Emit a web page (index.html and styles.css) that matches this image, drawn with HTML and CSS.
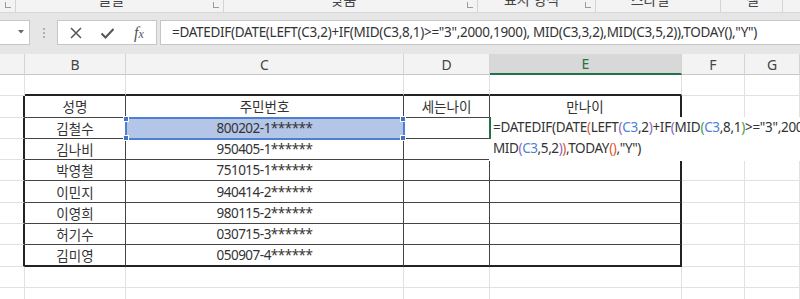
FILE: index.html
```html
<!DOCTYPE html>
<html lang="ko">
<head>
    <meta charset="UTF-8">
    <title>Excel - 만나이</title>
    <link rel="stylesheet" href="styles.css">
</head>
<body>
    <div class="ribbon">
        <div class="group g0"><span class="launch"></span></div>
        <div class="group g1"><span class="label">글꼴</span><span class="launch"></span></div>
        <div class="group g2"><span class="label">맞춤</span><span class="launch"></span></div>
        <div class="group g3"><span class="label">표시 형식</span><span class="launch"></span></div>
        <div class="group g4"><span class="label">스타일</span></div>
        <div class="group g5"><span class="label">셀</span></div>
        <div class="group g6"></div>
    </div>

    <div class="fbar">
        <div class="namebox">
            <svg width="6" height="4" viewBox="0 0 6 4"><path d="M0 0h6L3 3.5z" fill="#666"/></svg>
        </div>
        <div class="grip"><i></i><i></i><i></i></div>
        <div class="btns">
            <svg class="ico" width="14" height="14" viewBox="0 0 14 14"><path d="M2 2l10 10M12 2L2 12" stroke="#555" stroke-width="1.5" fill="none"/></svg>
            <svg class="ico" width="15" height="14" viewBox="0 0 15 14"><path d="M1.5 7.5l4 4L13.5 3" stroke="#555" stroke-width="2" fill="none"/></svg>
            <span class="fx">f<small>x</small></span>
        </div>
        <div class="formula">=DATEDIF(DATE(LEFT(C3,2)+IF(MID(C3,8,1)&gt;="3",2000,1900), MID(C3,3,2),MID(C3,5,2)),TODAY(),"Y")</div>
    </div>

    <div class="sheet">
        <!-- column headers -->
        <div class="c ch"></div>
        <div class="c ch">B</div>
        <div class="c ch">C</div>
        <div class="c ch">D</div>
        <div class="c ch act">E</div>
        <div class="c ch">F</div>
        <div class="c ch">G</div>

        <!-- row 1 -->
        <div class="c"></div>
        <div class="c ttop"></div>
        <div class="c ttop"></div>
        <div class="c ttop"></div>
        <div class="c ttop"></div>
        <div class="c"></div>
        <div class="c"></div>

        <!-- row 2 : header -->
        <div class="c tleft"></div>
        <div class="c tb">성명</div>
        <div class="c tb">주민번호</div>
        <div class="c tb">세는나이</div>
        <div class="c tb tright">만나이</div>
        <div class="c"></div>
        <div class="c"></div>

        <!-- row 3 -->
        <div class="c tleft"></div>
        <div class="c tb">김철수</div>
        <div class="c tb num sel">800202-1******
            <span class="h tl"></span><span class="h bl"></span><span class="h tr"></span><span class="h br"></span>
        </div>
        <div class="c tb"></div>
        <div class="c tb tright edit-cell">
            <div class="edit">
                <div class="l1">=DATEDIF(DATE<b class="o">(</b>LEFT<b class="p">(</b><b class="r">C3</b>,2<b class="p">)</b>+IF<b class="p">(</b>MID<b class="g">(</b><b class="r">C3</b>,8,1<b class="g">)</b>&gt;="3",2000,1900<b class="p">)</b>, MID<b class="p">(</b><b class="r">C3</b>,3,2<b class="p">)</b>,</div>
                <div>MID<b class="p">(</b><b class="r">C3</b>,5,2<b class="p">)</b><b class="o">)</b>,TODAY<b class="o">()</b>,"Y")</div>
            </div>
        </div>
        <div class="c"></div>
        <div class="c"></div>

        <!-- row 4 -->
        <div class="c tleft"></div>
        <div class="c tb">김나비</div>
        <div class="c tb num">950405-1******</div>
        <div class="c tb"></div>
        <div class="c tb tright"></div>
        <div class="c"></div>
        <div class="c"></div>

        <!-- row 5 -->
        <div class="c tleft"></div>
        <div class="c tb">박영철</div>
        <div class="c tb num">751015-1******</div>
        <div class="c tb"></div>
        <div class="c tb tright"></div>
        <div class="c"></div>
        <div class="c"></div>

        <!-- row 6 -->
        <div class="c tleft"></div>
        <div class="c tb">이민지</div>
        <div class="c tb num">940414-2******</div>
        <div class="c tb"></div>
        <div class="c tb tright"></div>
        <div class="c"></div>
        <div class="c"></div>

        <!-- row 7 -->
        <div class="c tleft"></div>
        <div class="c tb">이영희</div>
        <div class="c tb num">980115-2******</div>
        <div class="c tb"></div>
        <div class="c tb tright"></div>
        <div class="c"></div>
        <div class="c"></div>

        <!-- row 8 -->
        <div class="c tleft"></div>
        <div class="c tb">허기수</div>
        <div class="c tb num">030715-3******</div>
        <div class="c tb"></div>
        <div class="c tb tright"></div>
        <div class="c"></div>
        <div class="c"></div>

        <!-- row 9 -->
        <div class="c tleft"></div>
        <div class="c tb tbot">김미영</div>
        <div class="c tb num tbot">050907-4******</div>
        <div class="c tb tbot"></div>
        <div class="c tb tright tbot"></div>
        <div class="c"></div>
        <div class="c"></div>

        <!-- row 10 -->
        <div class="c"></div>
        <div class="c"></div>
        <div class="c"></div>
        <div class="c"></div>
        <div class="c"></div>
        <div class="c"></div>
        <div class="c"></div>

        <!-- row 11 -->
        <div class="c"></div>
        <div class="c"></div>
        <div class="c"></div>
        <div class="c"></div>
        <div class="c"></div>
        <div class="c"></div>
        <div class="c"></div>
    </div>
</body>
</html>
```

FILE: styles.css
```css
*{
    margin: 0;
    padding: 0;
    box-sizing: border-box;
}
body{
    width: 800px;
    height: 299px;
    overflow: hidden;
    background: #e6e6e6;
    font-family: "Noto Sans", "Noto Sans CJK KR", sans-serif;
    color: #333;
}

/* ribbon bottom strip */
.ribbon{
    height: 13px;
    display: flex;
    background: #f3f3f3;
    border-bottom: 1px solid #d6d6d6;
    overflow: hidden;
}
.group{
    position: relative;
    display: flex;
    justify-content: center;
    border-right: 1px solid #d4d4d4;
    height: 12px;
}
.g0{ width: 16px; }
.g1{ width: 208px; }
.g2{ width: 254px; }
.g3{ width: 118px; }
.g4{ width: 125px; }
.g5{ width: 62px; }
.g6{ flex: 1; border-right: none; }
.label{
    font-size: 14px;
    line-height: 20px;
    margin-top: -10px;
    color: #444;
    white-space: nowrap;
}
.launch{
    position: absolute;
    right: 4px;
    top: 2px;
    width: 6px;
    height: 6px;
    border-left: 1px solid #9a9a9a;
    border-bottom: 1px solid #9a9a9a;
}
.g1 .label{ margin-left: -16px; }
.g2 .label{ margin-left: -14px; }
.g3 .label{ margin-left: -10px; }
.g4 .label{ margin-left: -16px; }
.g5 .label{ margin-left: 2px; }

/* formula bar */
.fbar{
    display: flex;
    align-items: stretch;
    height: 25px;
    margin: 7px 0 9px;
}
.namebox{
    width: 30px;
    background: #fff;
    border: 1px solid #c6c6c6;
    border-left: none;
    display: flex;
    align-items: center;
    justify-content: flex-end;
    padding: 0 5px 2px 0;
}
.grip{
    width: 27px;
    display: flex;
    flex-direction: column;
    align-items: center;
    justify-content: center;
    gap: 2px;
}
.grip i{
    width: 2px;
    height: 2px;
    background: #b0b0b0;
}
.btns{
    width: 100px;
    background: #fff;
    border: 1px solid #c6c6c6;
    display: flex;
    align-items: center;
    padding-left: 11px;
}
.btns .ico{ margin-right: 17px; }
.btns .ico + .ico{ margin-right: 19px; }
.fx{
    font-family: "Liberation Serif", serif;
    font-style: italic;
    font-size: 16px;
    color: #555;
}
.fx small{ font-size: 12px; }
.formula{
    flex: 1;
    margin-left: 3px;
    background: #fff;
    border: 1px solid #c6c6c6;
    border-right: none;
    font-size: 13.5px;
    letter-spacing: -0.3px;
    line-height: 23px;
    padding-left: 11px;
    white-space: nowrap;
    overflow: hidden;
}

/* sheet grid */
.sheet{
    display: grid;
    grid-template-columns: 25px 101px 278px 86px 192px 63px 1fr;
    grid-template-rows: 21px;
    grid-auto-rows: 21.3px;
    background: #fff;
    font-size: 13.5px;
}
.c{
    border-right: 1px solid #e1e1e1;
    border-bottom: 1px solid #e1e1e1;
    display: flex;
    align-items: center;
    justify-content: center;
    white-space: nowrap;
}
.num{ letter-spacing: -0.5px; }
.ch{
    background: #f3f3f3;
    border-right-color: #d4d4d4;
    border-bottom-color: #c8c8c8;
    color: #444;
    font-size: 14px;
}
.ch.act{
    background: #d8d8d8;
    color: #217346;
    border-bottom: 2px solid #217346;
}
.tb{
    border-right-color: #444;
    border-bottom-color: #444;
}
.ttop{ border-bottom: 2px solid #222; }
.tleft{ border-right: 2px solid #222; }
.tright{ border-right: 2px solid #222; }
.tbot{ border-bottom: 2px solid #222; }

/* referenced range in edit mode */
.sel{
    position: relative;
    background: #b4c6e7;
    outline: 2px solid #4f7fd0;
    outline-offset: -1px;
}
.h{
    position: absolute;
    width: 6px;
    height: 6px;
    background: #4472c4;
    border: 1px solid #fff;
}
.h.tl{ left: -3px; top: -2px; }
.h.bl{ left: -3px; bottom: -3px; }
.h.tr{ right: -3px; top: -2px; }
.h.br{ right: -3px; bottom: -3px; }

/* cell being edited */
.edit-cell{ position: relative; }
.edit{
    position: absolute;
    left: -1px;
    top: -1px;
    width: 320px;
    height: 44px;
    background: #fff;
    z-index: 2;
    padding-left: 4px;
    font-size: 13.5px;
    letter-spacing: -0.4px;
    line-height: 21.3px;
    white-space: nowrap;
    overflow: hidden;
}
.edit .l1{ letter-spacing: -0.3px; }
.edit::before{
    content: "";
    position: absolute;
    left: 0;
    top: 0;
    width: 2px;
    height: 22px;
    background: #217346;
}
.edit b{ font-weight: normal; }
.edit .o{ color: #e0562b; }
.edit .p{ color: #8e62c4; }
.edit .g{ color: #3f9b49; }
.edit .r{ color: #4f7fd6; }
```
